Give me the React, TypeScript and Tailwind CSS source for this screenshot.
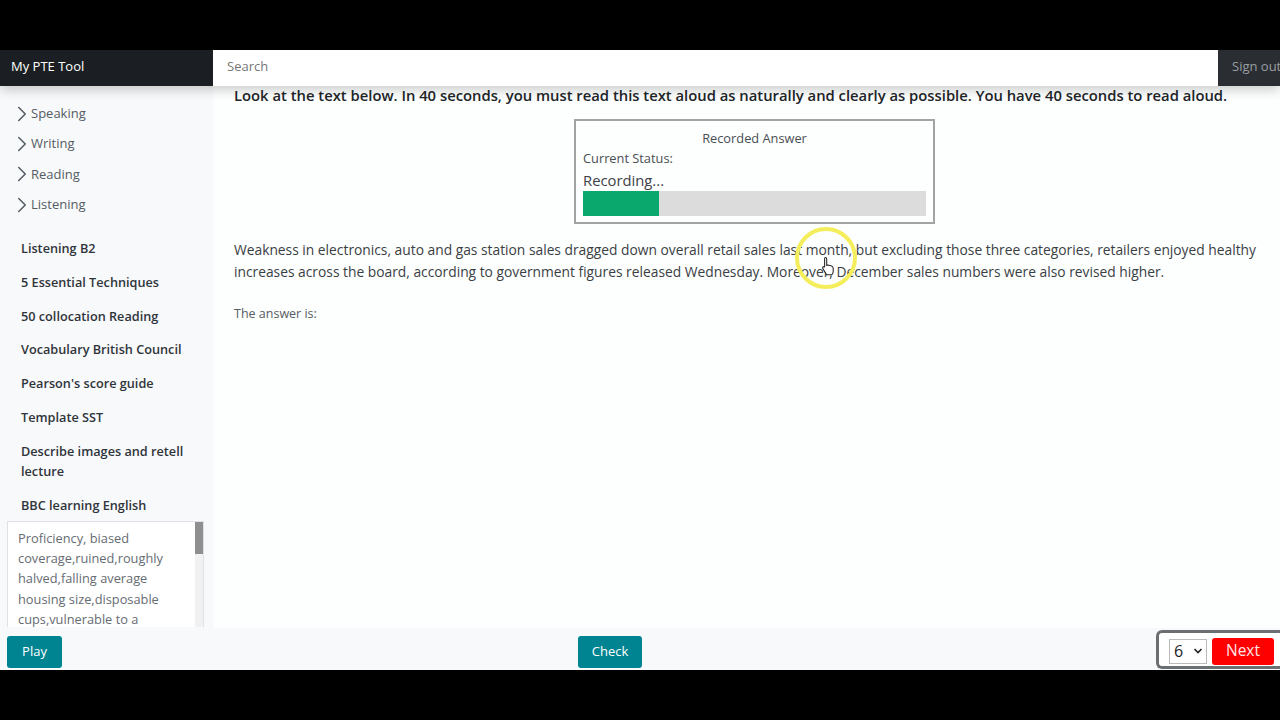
import { ChevronRight } from 'lucide-react';

const groups = ['Speaking', 'Writing', 'Reading', 'Listening'];

const links = [
  'Listening B2',
  '5 Essential Techniques',
  '50 collocation Reading',
  'Vocabulary British Council',
  "Pearson's score guide",
  'Template SST',
  'Describe images and retell lecture',
  'BBC learning English',
];

const App = () => {
  return (
    <div className="h-[720px] w-[1280px] overflow-hidden bg-black py-[50px] font-['Open_Sans','Noto_Sans',sans-serif]">
      <div className="relative flex h-[620px] flex-col overflow-hidden bg-white">
        {/* Top bar */}
        <header className="z-10 flex h-9 shrink-0 items-center bg-[#343a40] shadow-[0_4px_12px_rgba(0,0,0,0.2)]">
          <div className="flex h-full w-[213px] shrink-0 items-center bg-[#1b1f23] pb-[2px] pl-[11px] text-[13px] text-white">
            My PTE Tool
          </div>
          <div className="flex h-full flex-1 items-center bg-white pb-[2px] pl-[14px] text-[13px] text-[#777]">Search</div>
          <div className="flex h-full w-[62px] shrink-0 items-center overflow-hidden whitespace-nowrap bg-[#2a2e33] pb-[2px] pl-[14px] text-[13px] text-[#9a9da0]">
            Sign out
          </div>
        </header>

        <div className="flex min-h-0 flex-1">
          {/* Sidebar */}
          <aside className="flex w-[213px] shrink-0 flex-col bg-[#f8f9fa]">
            <ul className="flex flex-col gap-[10.2px] pl-[9px] pt-[18px]">
              {groups.map((g) => (
                <li key={g} className="flex h-5 items-center text-[13px] text-[#555c63]">
                  <ChevronRight size={26} strokeWidth={1.4} className="mr-[-4px] shrink-0" />
                  {g}
                </li>
              ))}
            </ul>
            <ul className="mt-[23.4px] flex flex-col gap-[13.8px] pl-[21px] pr-[20px]">
              {links.map((l) => (
                <li key={l} className="text-[12.7px] font-semibold leading-[20px] text-[#2f343a]">
                  {l}
                </li>
              ))}
            </ul>
            <div className="ml-[7px] mt-[6.4px] flex h-[106px] w-[197px] overflow-hidden border border-b-0 border-[#dee2e6] bg-white">
              <p className="flex-1 pl-[10px] pr-[16px] pt-[6px] text-[12.8px] leading-[20.2px] text-[#666c72]">
                Proficiency, biased coverage,ruined,roughly halved,falling average housing size,disposable cups,vulnerable to a
              </p>
              <div className="w-2 shrink-0 bg-[#f1f1f1]">
                <div className="h-[32px] bg-[#8f8f8f]" />
              </div>
            </div>
          </aside>

          {/* Main */}
          <main className="min-w-0 flex-1 bg-[#fdfefe] pl-[21px] pr-[16px]">
            <h1 className="mt-[-2px] text-[14.8px] font-semibold leading-[22px] text-[#212529]">
              Look at the text below. In 40 seconds, you must read this text aloud as naturally and clearly as possible. You have 40 seconds to read aloud.
            </h1>
            <div className="ml-[340px] mt-[13px] flex h-[105px] w-[361px] flex-col border-2 border-[#a3a3a3] px-[7px] pt-[7px] text-[#4a4f54]">
              <div className="text-center text-[12.8px] leading-[20px]">Recorded Answer</div>
              <div className="text-[12.8px] leading-[20px]">Current Status:</div>
              <div className="mt-[1px] text-[14.8px] leading-[22px] text-[#3d4247]">Recording...</div>
              <div className="h-[25px] bg-[#dcdcdc]">
                <div className="h-full w-[76px] bg-[#0aa86c]" />
              </div>
            </div>
            <p className="mt-[15px] text-[13.8px] leading-[22px] text-[#3a3f44]">
              Weakness in electronics, auto and gas station sales dragged down overall retail sales last month, but excluding those three categories, retailers enjoyed healthy increases across the board, according to government figures released Wednesday. Moreover, December sales numbers were also revised higher.
            </p>
            <p className="mt-[21px] text-[12.5px] leading-[20px] text-[#555c63]">The answer is:</p>
          </main>
        </div>

        {/* Bottom bar */}
        <footer className="relative flex h-[42px] shrink-0 items-center justify-between bg-[#f8f9fa] pl-[7px] pt-[6px]">
          <button className="h-[32px] w-[55px] rounded-[3px] bg-[#008491] text-[13px] text-white">Play</button>
          <button className="ml-[2px] h-[32px] w-[64px] rounded-[3px] bg-[#008491] text-[13px] text-white">Check</button>
          <div className="mt-[-4px] flex h-[39px] w-[124px] items-center gap-[5px] self-start rounded-l-[6px] border-y-[3px] border-l-[3px] border-[#6c6f72] bg-white pl-[10px] pt-[3px]">
            <div className="flex h-[25px] w-[38px] items-center justify-between border border-[#bbb] pl-[4px] pr-[3px] text-[16px] leading-none text-[#222]">
              6
              <svg width="10" height="6" viewBox="0 0 10 6" fill="none" stroke="#222" strokeWidth="1.6">
                <path d="M1.5 1l3.5 3.5L8.5 1" />
              </svg>
            </div>
            <button className="h-[27px] w-[62px] rounded-[3px] bg-[#fe0000] text-[15.5px] font-medium text-[#ffe5e5]">Next</button>
          </div>
        </footer>

        {/* Cursor highlight */}
        <div className="pointer-events-none absolute left-[795px] top-[177px] h-[62px] w-[62px] rounded-full border-[4px] border-[#f4ee5c]" />
        <svg className="pointer-events-none absolute left-[821px] top-[206px]" width="15" height="21" viewBox="0 0 14 20">
          <path
            d="M4 1.5c.8 0 1.3.6 1.3 1.4v6l1-.2 1 .1 1 .2 1 .3 1.2.6c.6.5 1 1.2 1 2.2v2.4c0 1.3-.5 2.4-1.3 3.4H5.2L1.8 12.3c-.6-.8-.5-1.6.2-2 .6-.3 1.1 0 1.3.4V2.9c0-.8 0-1.4.7-1.4z"
            fill="#fff"
            stroke="#222"
            strokeWidth="1"
          />
        </svg>
      </div>
    </div>
  );
};

export default App;
